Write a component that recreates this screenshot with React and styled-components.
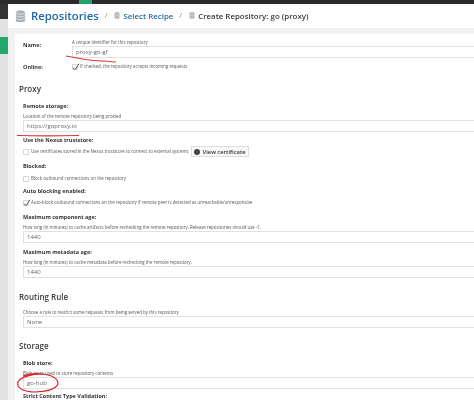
import React from "react";
import styled, { createGlobalStyle } from "styled-components";

const Global = createGlobalStyle`
  html, body {
    margin: 0;
    height: 400px;
    overflow: hidden;
    background: #fff;
    font-family: "Open Sans", "Liberation Sans", sans-serif;
  }
`;

const Page = styled.div`
  position: relative;
  width: 474px;
  height: 400px;
  overflow: hidden;
  background: #e4e4e4;
  filter: blur(0.35px);
`;

const TopBar = styled.div`
  height: 4px;
  background: #2b2b2b;
  display: flex;
  padding-left: 79px;
`;

const TopTab = styled.div`
  width: 13px;
  background: #1fa56b;
`;

const Body = styled.div`
  display: flex;
  height: 396px;
`;

const Sidebar = styled.div`
  width: 8px;
  flex: none;
  background: #e2e2e2;
`;

const SideDark = styled.div`
  height: 15px;
  background: #333;
`;

const SideMark = styled.div`
  height: 17px;
  margin-top: 18px;
  background: #22a86c;
`;

const Main = styled.div`
  flex: 1;
  min-width: 0;
  background: #f2f2f2;
`;

const Header = styled.div`
  height: 24px;
  background: #fff;
  display: flex;
  align-items: center;
  padding-left: 7px;
  color: #333;
  white-space: nowrap;
`;

const Title = styled.span`
  margin-left: 5px;
  font-size: 11.3px;
  font-weight: 600;
  color: #1f66a8;
  line-height: 14px;
`;

const Crumb = styled.span`
  margin-left: 3px;
  font-size: 7.9px;
  font-weight: 600;
  color: ${(p) => (p.$link ? "#2a6cab" : "#3a3a3a")};
`;

const Slash = styled.span`
  margin: 0 7px 2px 6px;
  font-size: 7.5px;
  color: #888;
`;

const Form = styled.div`
  margin: 6px 0 0 7px;
  height: 366px;
  background: #fff;
  padding: 6px 0 0 8px;
  overflow: hidden;
`;

const InlineField = styled.div`
  display: grid;
  grid-template-columns: 49px 1fr;
  margin-bottom: ${(p) => p.$gap || 0}px;
`;

const Label = styled.div`
  font-size: 5.5px;
  line-height: 8px;
  font-weight: 700;
  color: #333;
  margin-top: ${(p) => p.$top || 0}px;
`;

const Hint = styled.div`
  font-size: 4.4px;
  line-height: 5px;
  color: #555;
  white-space: nowrap;
  margin-top: ${(p) => p.$top || 0}px;
`;

const Input = styled.div`
  height: 12px;
  box-sizing: border-box;
  margin-top: ${(p) => p.$top || 0}px;
  border: 1px solid #e1e1e1;
  border-right: 0;
  background: #fff;
  padding-left: 3px;
  font-size: 6px;
  line-height: 10px;
  color: #666;
  white-space: nowrap;
`;

const Section = styled.div`
  font-size: 8px;
  line-height: 10px;
  font-weight: 600;
  color: #3a3a3a;
  margin: ${(p) => p.$top}px 0 ${(p) => p.$bottom}px -4px;
`;

const CheckRow = styled.div`
  display: flex;
  align-items: center;
  height: 11px;
  margin-top: ${(p) => p.$top || 0}px;
`;

const Box = styled.span`
  width: 6px;
  height: 6px;
  flex: none;
  position: relative;
  border: 1px solid #d8d8d8;
  box-sizing: border-box;
  margin-right: 2px;
  background: #fff;
`;

const Tick = styled.svg`
  position: absolute;
  left: -1px;
  top: -2px;
  width: 8px;
  height: 8px;
`;

const CertButton = styled.div`
  height: 11px;
  width: 58px;
  box-sizing: border-box;
  border: 1px solid #dedede;
  background: #f8f8f8;
  margin-left: 2px;
  display: flex;
  align-items: center;
  padding-left: 2px;
  gap: 3px;
  font-size: 5.8px;
  font-weight: 600;
  color: #333;
  white-space: nowrap;
`;

const Dot = styled.span`
  width: 6px;
  height: 6px;
  border-radius: 50%;
  background: #444;
`;

const Scribbles = styled.svg`
  position: absolute;
  left: 0;
  top: 0;
  width: 474px;
  height: 400px;
  pointer-events: none;
`;

const DbIcon = ({ size, color }) => (
  <svg width={size} height={size * 1.17} viewBox="0 0 12 14" style={{ flex: "none" }}>
    <path d="M1 2.5C1 1.2 3.2.5 6 .5s5 .7 5 2v9c0 1.3-2.2 2-5 2s-5-.7-5-2z" fill={color} />
    <path
      d="M1 2.5c0 1.3 2.2 2 5 2s5-.7 5-2M1 5.5c0 1.3 2.2 2 5 2s5-.7 5-2M1 8.5c0 1.3 2.2 2 5 2s5-.7 5-2"
      fill="none"
      stroke="#fff"
      strokeWidth=".7"
    />
  </svg>
);

const Check = ({ checked }) => (
  <Box>
    {checked && (
      <Tick viewBox="0 0 8 8">
        <path d="M1 4.5l2 2.2L7 .8" fill="none" stroke="#555" strokeWidth="1" />
      </Tick>
    )}
  </Box>
);

export default function App() {
  return (
    <Page>
      <Global />
      <TopBar>
        <TopTab />
      </TopBar>
      <Body>
        <Sidebar>
          <SideDark />
          <SideMark />
        </Sidebar>
        <Main>
          <Header>
            <DbIcon size={11} color="#a9b0b5" />
            <Title>Repositories</Title>
            <Slash>/</Slash>
            <DbIcon size={6} color="#a9b0b5" />
            <Crumb $link>Select Recipe</Crumb>
            <Slash>/</Slash>
            <DbIcon size={6} color="#a9b0b5" />
            <Crumb>Create Repository: go (proxy)</Crumb>
          </Header>
          <Form>
            <InlineField $gap={3}>
              <Label $top={1}>Name:</Label>
              <div>
                <Hint>A unique identifier for this repository</Hint>
                <Input $top={1}>proxy-go-gf</Input>
              </div>
            </InlineField>
            <InlineField>
              <Label $top={2}>Online:</Label>
              <CheckRow>
                <Check checked />
                <Hint>If checked, the repository accepts incoming requests</Hint>
              </CheckRow>
            </InlineField>

            <Section $top={12} $bottom={8}>Proxy</Section>
            <Label>Remote storage:</Label>
            <Hint $top={4}>Location of the remote repository being proxied</Hint>
            <Input $top={1}>https://goproxy.io</Input>

            <Label $top={4}>Use the Nexus truststore:</Label>
            <CheckRow $top={2}>
              <Check />
              <Hint>Use certificates stored in the Nexus truststore to connect to external systems</Hint>
              <CertButton>
                <Dot />
                View certificate
              </CertButton>
            </CheckRow>

            <Label $top={5}>Blocked:</Label>
            <CheckRow $top={3}>
              <Check />
              <Hint>Block outbound connections on the repository</Hint>
            </CheckRow>

            <Label $top={3}>Auto blocking enabled:</Label>
            <CheckRow $top={2}>
              <Check checked />
              <Hint>Auto-block outbound connections on the repository if remote peer is detected as unreachable/unresponsive</Hint>
            </CheckRow>

            <Label $top={5}>Maximum component age:</Label>
            <Hint $top={4}>How long (in minutes) to cache artifacts before rechecking the remote repository. Release repositories should use -1.</Hint>
            <Input $top={1}>1440</Input>

            <Label $top={5}>Maximum metadata age:</Label>
            <Hint $top={4}>How long (in minutes) to cache metadata before rechecking the remote repository.</Hint>
            <Input $top={1}>1440</Input>

            <Section $top={14} $bottom={8}>Routing Rule</Section>
            <Hint>Choose a rule to restrict some requests from being served by this repository</Hint>
            <Input $top={1}>None</Input>

            <Section $top={13} $bottom={8}>Storage</Section>
            <Label>Blob store:</Label>
            <Hint $top={4}>Blob store used to store repository contents</Hint>
            <Input $top={1}>go-hub</Input>
            <Label $top={3}>Strict Content Type Validation:</Label>
          </Form>
        </Main>
      </Body>
      <Scribbles viewBox="0 0 474 400">
        <path d="M66 56c12 2 24 5 36 5 5 0 10 1 14 1" fill="none" stroke="#d8322a" strokeWidth="1" />
        <path d="M17 135.500c20 .4 40 .4 62 0" fill="none" stroke="#d8322a" strokeWidth="1.200" />
        <path
          d="M42 374c-10 0-22 3-24 8-2 6 6 10 17 10 11 0 21-3 23-8 0-6-6-9-16-10-7-1-14 0-19 2"
          fill="none"
          stroke="#e0202a"
          strokeWidth="1.200"
        />
      </Scribbles>
    </Page>
  );
}
